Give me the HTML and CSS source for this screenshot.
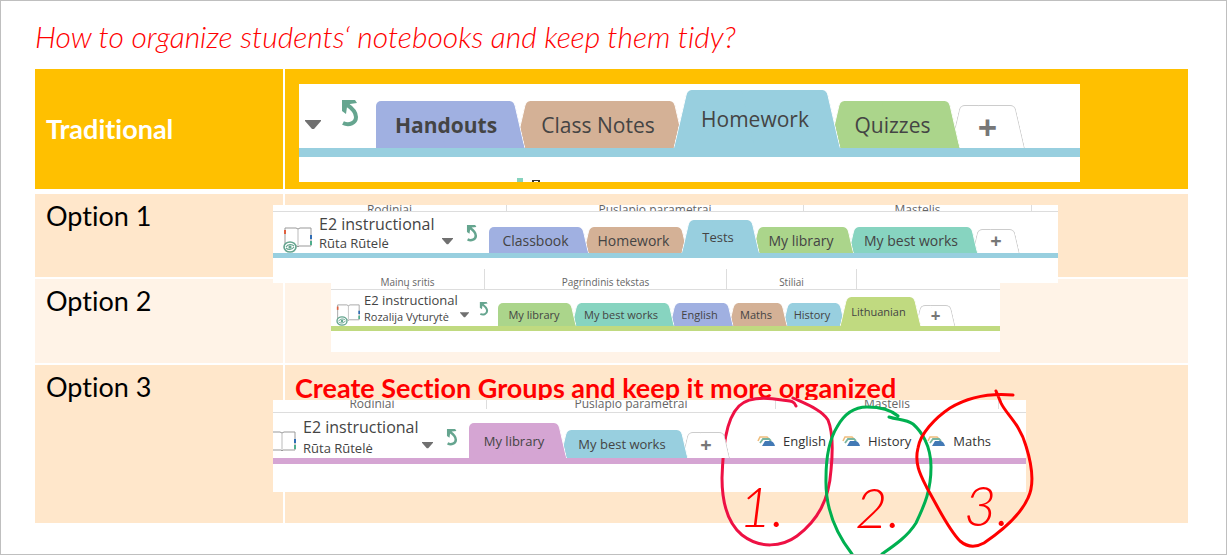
FILE: index.html
```html
<!DOCTYPE html>
<html lang="en">
<head>
    <meta charset="UTF-8">
    <meta name="viewport" content="width=device-width, initial-scale=1.0">
    <link rel="stylesheet" href="styles.css">
    <title>Students' notebooks</title>
</head>
<body>
    <svg class="defs" width="0" height="0" aria-hidden="true">
        <symbol id="caret" viewBox="0 0 16 10">
            <path d="M0 0H16V1L9 9H7L0 1Z" fill="#707070"/>
        </symbol>
        <symbol id="undo" viewBox="0 0 18 27">
            <path d="M1 0H14L16 3L9 4L6 7L5 14L1 11Z" fill="#65a58f"/>
            <path d="M5 4C11 8 15 12 15 17C15 23 8 26 2 23" fill="none" stroke="#65a58f" stroke-width="4"/>
        </symbol>
        <symbol id="book" viewBox="0 0 29 24">
            <path d="M2 1H13L15 2L17 1H28V19H16L15 20L14 19H2Z" fill="#fff" stroke="#999"/>
            <path d="M15 2V19" stroke="#bbb"/>
            <path d="M1 3H3V7H1Z" fill="#e0603f"/>
            <path d="M27 8H29V12H27Z" fill="#2f6db5"/>
            <path d="M27 14H29V18H27Z" fill="#4fae8c"/>
        </symbol>
        <symbol id="sync" viewBox="0 0 14 12">
            <ellipse cx="7" cy="6" rx="6" ry="5" fill="#fff" stroke="#65a58f" stroke-width="1.6"/>
            <path d="M3 6C5 3 9 3 11 5M11 6C9 9 5 9 3 7" fill="none" stroke="#65a58f" stroke-width="1.2"/>
            <circle cx="7" cy="6" r="1.6" fill="#65a58f"/>
        </symbol>
        <symbol id="group" viewBox="0 0 18 10">
            <path d="M1 5L3 1H10L12 3" fill="none" stroke="#efbd7c" stroke-width="1.6"/>
            <path d="M3 7L6 3H12L14 5" fill="none" stroke="#78b5a0" stroke-width="1.8"/>
            <path d="M5 10L8 5H14Q17 6 18 10Z" fill="#4279b5"/>
        </symbol>
    </svg>
    <main class="slide">
        <h1 class="title">How to organize students‘ notebooks and keep them tidy?</h1>
        <table class="options">
            <tr class="first">
                <th scope="row">Traditional</th>
                <td>
                    <div class="strip traditional">
                        <div class="notebar">
                            <div class="notebook">
                                <svg class="caret"><use href="#caret"/></svg>
                                <svg class="undo"><use href="#undo"/></svg>
                            </div>
                            <div class="tabs">
                                <button class="tab violet bold">Handouts</button>
                                <button class="tab brown">Class Notes</button>
                                <button class="tab blue active">Homework</button>
                                <button class="tab green">Quizzes</button>
                                <button class="tab plus">+</button>
                            </div>
                        </div>
                        <svg class="scraps" viewBox="0 0 24 4"><path d="M0 0H6V4H0Z" fill="#86d3be"/><path d="M15 4V2H23V4H21V3H17V4Z" fill="#333"/></svg>
                    </div>
                </td>
            </tr>
            <tr class="one">
                <th scope="row">Option 1</th>
                <td>
                    <div class="strip option1">
                        <div class="ribbon"><span>Rodiniai</span><span>Puslapio parametrai</span><span>Mastelis</span></div>
                        <div class="notebar">
                            <div class="notebook">
                                <span class="cover"><svg class="book"><use href="#book"/></svg><svg class="sync"><use href="#sync"/></svg></span>
                                <div class="who"><p class="name">E2 instructional</p><p class="student">Rūta Rūtelė</p></div>
                                <svg class="caret"><use href="#caret"/></svg>
                                <svg class="undo"><use href="#undo"/></svg>
                            </div>
                            <div class="tabs">
                                <button class="tab violet">Classbook</button>
                                <button class="tab brown">Homework</button>
                                <button class="tab blue active">Tests</button>
                                <button class="tab green">My library</button>
                                <button class="tab teal">My best works</button>
                                <button class="tab plus">+</button>
                            </div>
                        </div>
                    </div>
                </td>
            </tr>
            <tr class="two">
                <th scope="row">Option 2</th>
                <td>
                    <div class="strip option2">
                        <div class="ribbon"><span>Mainų sritis</span><span>Pagrindinis tekstas</span><span>Stiliai</span></div>
                        <div class="notebar">
                            <div class="notebook">
                                <span class="cover"><svg class="book"><use href="#book"/></svg><svg class="sync"><use href="#sync"/></svg></span>
                                <div class="who"><p class="name">E2 instructional</p><p class="student">Rozalija Vyturytė</p></div>
                                <svg class="caret"><use href="#caret"/></svg>
                                <svg class="undo"><use href="#undo"/></svg>
                            </div>
                            <div class="tabs">
                                <button class="tab green">My library</button>
                                <button class="tab teal">My best works</button>
                                <button class="tab violet">English</button>
                                <button class="tab brown">Maths</button>
                                <button class="tab blue">History</button>
                                <button class="tab lime active">Lithuanian</button>
                                <button class="tab plus">+</button>
                            </div>
                        </div>
                    </div>
                </td>
            </tr>
            <tr class="three">
                <th scope="row">Option 3</th>
                <td>
                    <p class="note">Create Section Groups and keep it more organized</p>
                    <div class="strip option3">
                        <div class="ribbon"><span>Rodiniai</span><span>Puslapio parametrai</span><span>Mastelis</span></div>
                        <div class="notebar">
                            <div class="notebook">
                                <span class="cover"><svg class="book"><use href="#book"/></svg></span>
                                <div class="who"><p class="name">E2 instructional</p><p class="student">Rūta Rūtelė</p></div>
                                <svg class="caret"><use href="#caret"/></svg>
                                <svg class="undo"><use href="#undo"/></svg>
                            </div>
                            <div class="tabs">
                                <button class="tab pink active">My library</button>
                                <button class="tab blue">My best works</button>
                                <button class="tab plus">+</button>
                            </div>
                            <div class="groups">
                                <button class="group"><svg><use href="#group"/></svg>English</button>
                                <button class="group"><svg><use href="#group"/></svg>History</button>
                                <button class="group"><svg><use href="#group"/></svg>Maths</button>
                            </div>
                        </div>
                    </div>
                </td>
            </tr>
        </table>
        <!-- pen marks over the section groups -->
        <svg class="ink" viewBox="0 0 1227 555">
            <path stroke="#ee1144" d="M796 406C794 400 789 401 782 400C765 397 748 397 739 406C725 420 723 450 722 478C722 508 730 525 742 535C760 549 782 547 797 536C818 520 829 500 831 470C833 450 833 432 828 420C822 410 806 404 793 398"/>
            <path stroke="#00b050" d="M898 416C890 409 878 407 867 407C852 407 843 416 837 427C829 440 826 458 826 478C825 510 838 536 852 554M889 417C898 420 906 419 913 424C921 431 931 445 931 467C931 490 925 504 916 523C908 536 895 545 882 554"/>
            <path stroke="#ff0000" d="M1013 395C990 393 970 396 950 408C935 418 920 434 918 448C914 464 921 476 927 488C938 507 948 529 960 541C967 547 975 548 984 543C1003 530 1020 516 1028 498C1035 484 1031 462 1026 446C1020 424 1006 414 1001 403L996 391"/>
            <text x="739" y="527">1.</text>
            <text x="855" y="528">2.</text>
            <text x="964" y="526">3.</text>
        </svg>
    </main>
</body>
</html>
```

FILE: styles.css
```css
*{
    padding: 0;
    margin: 0;
    box-sizing: border-box;
}
body{
    background-color: #fff;
    font-family: "Open Sans", "Noto Sans", sans-serif;
    color: #444;
}
.defs{
    position: absolute;
}
.slide{
    position: relative;
    min-height: 100vh;
    border: 1px solid #bfbfbf;
    overflow: hidden;
    font-variant-ligatures: none;
}
.title{
    padding: 15px 0 0 34px;
    height: 66px;
    font-family: "Segoe Print", Lato, sans-serif;
    font-size: 30px;
    line-height: 40px;
    font-style: italic;
    font-weight: 300;
    color: #ff0000;
}

/* table */
.options{
    width: calc(100% - 68px);
    margin-left: 32px;
    table-layout: fixed;
    border-spacing: 2px;
    font-family: Lato, sans-serif;
}
.options th{
    width: 248px;
    padding: 6px 11px;
    text-align: left;
    vertical-align: top;
    font-size: 27px;
    line-height: 32px;
    font-weight: 400;
    color: #000;
}
.options td{
    position: relative;
    vertical-align: top;
    padding: 7px 10px;
}
.options .first th{
    vertical-align: middle;
    font-weight: 700;
    color: #fff;
}
.first th,
.first td{
    height: 123px;
    background-color: #ffc000;
    border-bottom: 3px solid #fff;
}
.one th,
.one td{
    height: 83px;
    background-color: #ffe7cb;
}
.two th,
.two td{
    height: 84px;
    background-color: #fff3e7;
}
.three th,
.three td{
    height: 158px;
    background-color: #ffe7cb;
}
.note{
    font-size: 27px;
    line-height: 32px;
    font-weight: 700;
    color: #ff0000;
}

/* screen strips, laid over the cells */
.strip{
    position: absolute;
    background-color: #fff;
    overflow: hidden;
    font-family: "Open Sans", "Noto Sans", sans-serif;
}
.ribbon{
    display: grid;
    border-bottom: 1px solid #ddd;
    overflow: hidden;
}
.ribbon span{
    text-align: center;
    border-right: 1px solid #ddd;
    color: #666;
    white-space: nowrap;
}
.notebar{
    display: flex;
    align-items: flex-end;
    border-bottom: 5px solid #98cfdf;
}
.notebook{
    display: flex;
    align-self: stretch;
    align-items: flex-start;
    flex-shrink: 0;
}
.notebook svg{
    display: block;
}
.cover{
    position: relative;
}
.sync{
    position: absolute;
    left: 0;
    bottom: -2px;
    width: 14px;
    height: 12px;
}
.who{
    flex: 1;
    white-space: nowrap;
}
.tabs{
    display: grid;
    align-items: end;
    padding-right: 8px;
    overflow: hidden;
}
.tab{
    position: relative;
    height: 26px;
    padding-right: 4px;
    border: none;
    background: none;
    font-family: inherit;
    font-size: 13px;
    color: #444;
    white-space: nowrap;
}
.tab::before,
.tab::after{
    content: "";
    position: absolute;
    top: 0;
    bottom: 0;
    width: 55%;
    z-index: -1;
    background-color: var(--tab);
}
.tab::before{
    left: 0;
    border-left: 1px solid #fff;
    border-top-left-radius: 5px;
    transform: skewX(-13deg);
}
.tab::after{
    right: 0;
    border-right: 1px solid #fff;
    border-top-right-radius: 5px;
    transform: skewX(13deg);
}
.tab:first-child::before{
    border-left: none;
    transform: none;
}
.tab:nth-child(1){ z-index: 7; }
.tab:nth-child(2){ z-index: 6; }
.tab:nth-child(3){ z-index: 5; }
.tab:nth-child(4){ z-index: 4; }
.tab:nth-child(5){ z-index: 3; }
.tab:nth-child(6){ z-index: 2; }
.tab:nth-child(7){ z-index: 1; }
.tab.active{
    z-index: 8;
    height: 33px;
}
.violet{ --tab: #a0b0e1; }
.brown{ --tab: #d4b196; }
.blue{ --tab: #98cfdf; }
.green{ --tab: #abd58b; }
.teal{ --tab: #87d4c0; }
.lime{ --tab: #c0da80; }
.pink{ --tab: #d5a5d3; }
.bold{
    font-weight: 700;
}
.tab.plus{
    --tab: #fff;
    height: 24px;
    padding: 0;
    font-size: 20px;
    line-height: 20px;
    font-weight: 700;
    color: #777;
}
.tab.plus::before{
    border-left: 1px solid #ccc;
    border-top: 1px solid #ccc;
}
.tab.plus::after{
    border-right: 1px solid #ccc;
    border-top: 1px solid #ccc;
}

.traditional{
    left: 14px;
    top: 15px;
    width: 781px;
    height: 98px;
}
.traditional .notebar{
    height: 73px;
    border-bottom-width: 9px;
}
.traditional .notebook{
    width: 77px;
    padding: 16px 17px 0 6px;
    justify-content: space-between;
}
.traditional .caret{
    width: 16px;
    height: 10px;
    margin-top: 20px;
}
.traditional .undo{
    width: 18px;
    height: 27px;
    margin: 0;
}
.traditional .tabs{
    grid-template-columns: 144px 160px 154px 121px 65px;
}
.traditional .tab{
    height: 47px;
    font-size: 21px;
}
.traditional .tab.active{
    height: 58px;
}
.traditional .tab.plus{
    height: 43px;
    font-size: 34px;
}
.scraps{
    display: block;
    width: 24px;
    height: 4px;
    margin: 21px 0 0 218px;
}

.option1{
    left: -12px;
    top: 11px;
    width: 785px;
    height: 78px;
    z-index: 2;
}
.option1 .ribbon{
    grid-template-columns: 234px 297px 228px;
    height: 7px;
    align-items: end;
    font-size: 12px;
    line-height: 10px;
}
.option1 .notebar{
    height: 46px;
}
.option1 .notebook{
    width: 216px;
    padding: 3px 11px 0 10px;
}
.option1 .book{
    width: 29px;
    height: 24px;
    margin: 12px 7px 0 0;
}
.name{
    font-size: 16px;
    line-height: 18px;
}
.student{
    font-size: 13px;
    line-height: 20px;
}
.caret{
    width: 11px;
    height: 7px;
    margin: 23px 13px 0 0;
}
.undo{
    width: 12px;
    height: 17px;
    margin-top: 10px;
}
.option1 .tabs{
    grid-template-columns: 97px 99px 70px 96px 124px 42px;
}
.option1 .tab{
    font-size: 14px;
}
.option1 .tab.active{
    font-size: 13px;
}
.option1 .tab.plus{
    font-size: 20px;
}

.option2{
    left: 46px;
    top: -11px;
    width: 669px;
    height: 84px;
    z-index: 3;
}
.option2 .ribbon{
    grid-template-columns: 154px 242px 130px;
    height: 22px;
    padding: 1px 0 3px;
    font-size: 10px;
    line-height: 26px;
}
.option2 .notebar{
    height: 41px;
    border-bottom-color: #c0da80;
}
.option2 .notebook{
    width: 167px;
    padding: 2px 9px 0 5px;
}
.option2 .book{
    width: 24px;
    height: 20px;
    margin: 12px 4px 0 0;
}
.option2 .sync{
    width: 12px;
    height: 10px;
}
.option2 .name{
    font-size: 13px;
    line-height: 17px;
}
.option2 .student{
    font-size: 11px;
    line-height: 16px;
}
.option2 .caret{
    width: 9px;
    height: 6px;
    margin: 20px 10px 0 0;
}
.option2 .undo{
    width: 10px;
    height: 14px;
}
.option2 .tabs{
    grid-template-columns: 76px 98px 59px 54px 58px 75px 35px;
}
.option2 .tab{
    height: 23px;
    font-size: 11px;
}
.option2 .tab.active{
    height: 29px;
}
.option2 .tab.plus{
    height: 21px;
    font-size: 17px;
}

.option3{
    left: -12px;
    top: 35px;
    width: 753px;
    height: 92px;
}
.option3 .ribbon{
    grid-template-columns: 229px 289px 223px;
    height: 13px;
    margin-left: -15px;
    padding-bottom: 3px;
    font-size: 12px;
    line-height: 8px;
}
.option3 .notebar{
    height: 51px;
    border-bottom-width: 6px;
    border-bottom-color: #d5a5d3;
}
.option3 .notebook{
    width: 202px;
    margin-left: -6px;
    padding: 4px 11px 0 0;
}
.option3 .book{
    width: 29px;
    height: 24px;
    margin: 14px 7px 0 0;
}
.option3 .name{
    line-height: 20px;
}
.option3 .student{
    line-height: 22px;
}
.option3 .caret{
    margin-top: 25px;
}
.option3 .undo{
    margin-top: 12px;
}
.option3 .tabs{
    grid-template-columns: 94px 122px 42px;
}
.option3 .tab{
    height: 28px;
}
.option3 .tab.active{
    height: 35px;
}
.option3 .tab.plus{
    height: 26px;
}
.groups{
    display: flex;
    gap: 16px;
    padding: 0 0 8px 22px;
}
.group{
    display: flex;
    align-items: center;
    gap: 8px;
    border: none;
    background: none;
    font-family: inherit;
    font-size: 13px;
    color: #333;
}
.group svg{
    width: 18px;
    height: 10px;
}

.ink{
    position: absolute;
    left: -1px;
    top: -1px;
    width: 1227px;
    height: 555px;
    z-index: 4;
    fill: none;
    stroke-width: 3;
    stroke-linecap: round;
    pointer-events: none;
}
.ink text{
    fill: #ff0000;
    font-family: "Segoe Print", Lato, sans-serif;
    font-size: 56px;
    font-style: italic;
    font-weight: 300;
}
```
